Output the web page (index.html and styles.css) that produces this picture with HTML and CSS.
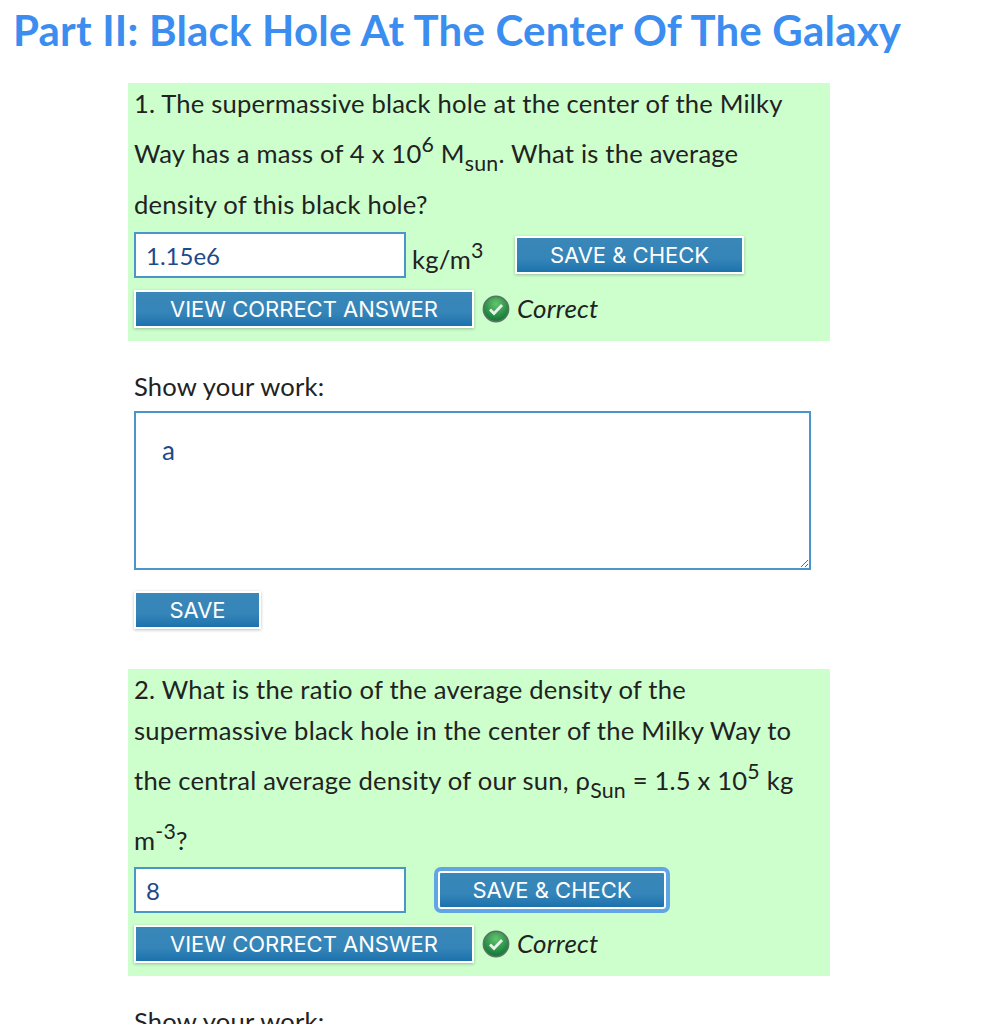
FILE: index.html
```html
<!DOCTYPE html>
<html lang="en">
<head>
    <meta charset="UTF-8">
    <title>Part II: Black Hole At The Center Of The Galaxy</title>
    <link rel="stylesheet" href="styles.css">
</head>
<body>
    <h1>Part II: Black Hole At The Center Of The Galaxy</h1>
    <div class="container">
        <div class="question">
            <p>1. The supermassive black hole at the center of the Milky Way has a mass of 4 x 10<sup>6</sup> M<sub>sun</sub>. What is the average density of this black hole?</p>
            <div class="answer-row answer-row-unit">
                <input class="answer" type="text" value="1.15e6">
                <span class="unit">kg/m<sup>3</sup></span>
                <button class="btn btn-check" type="button">SAVE &amp; CHECK</button>
            </div>
            <div class="result-row">
                <button class="btn btn-view" type="button">VIEW CORRECT ANSWER</button>
                <svg class="check" viewBox="0 0 28 28"><use href="#check-icon"></use></svg>
                <em>Correct</em>
            </div>
        </div>
        <div class="work">
            <p>Show your work:</p>
            <textarea>a</textarea>
            <button class="btn btn-save" type="button">SAVE</button>
        </div>
        <div class="question">
            <p>2. What is the ratio of the average density of the supermassive black hole in the center of the Milky Way to the central average density of our sun, &rho;<sub>Sun</sub> = 1.5 x 10<sup>5</sup> kg m<sup>-3</sup>?</p>
            <div class="answer-row">
                <input class="answer" type="text" value="8">
                <button class="btn btn-check btn-focus" type="button">SAVE &amp; CHECK</button>
            </div>
            <div class="result-row">
                <button class="btn btn-view" type="button">VIEW CORRECT ANSWER</button>
                <svg class="check" viewBox="0 0 28 28"><use href="#check-icon"></use></svg>
                <em>Correct</em>
            </div>
        </div>
        <div class="work">
            <p>Show your work:</p>
        </div>
    </div>
    <svg class="defs" width="0" height="0">
        <defs>
            <radialGradient id="green" cx="50%" cy="30%" r="70%">
                <stop offset="0%" stop-color="#62c56e"/>
                <stop offset="100%" stop-color="#0d7433"/>
            </radialGradient>
            <g id="check-icon">
                <circle cx="14" cy="14" r="12.6" fill="url(#green)" stroke="#5b7564" stroke-width="1.6"/>
                <path d="M8 14.5l4 4 8-8.5" fill="none" stroke="#e9f2ea" stroke-width="2.8"/>
            </g>
        </defs>
    </svg>
</body>
</html>
```

FILE: styles.css
```css
html, body {
    height: 1024px;
    overflow: hidden;
}
body {
    margin: 0;
    font-family: "Lato", sans-serif;
    font-size: 25.6px;
    line-height: 41px;
    letter-spacing: 0.2px;
    color: #222;
    background: white;
}
h1 {
    margin: 0;
    padding: 5px 0 0 13px;
    height: 83px;
    box-sizing: border-box;
    font-size: 42px;
    line-height: 50px;
    font-weight: 700;
    letter-spacing: 0.2px;
    color: #3b8ef0;
    white-space: nowrap;
}
p {
    margin: 0;
}
sup {
    vertical-align: 11px;
}
sub {
    vertical-align: -8px;
}
.container {
    width: 702px;
    margin-left: 128px;
}
.question {
    background: #ccffcc;
    padding: 0 6px 6px;
}
.question p {
    max-width: 670px;
}
.answer-row {
    display: flex;
    align-items: center;
    height: 54px;
    margin-top: 2px;
}
.answer-row-unit {
    margin-top: 3px;
}
.answer {
    width: 272px;
    height: 46px;
    box-sizing: border-box;
    padding: 0 10px;
    border: 2px solid #4b96c8;
    background: white;
    color: #1c4a8a;
    font-family: inherit;
    font-size: 24px;
}
.unit {
    margin-left: 6px;
    width: 103px;
}
.btn {
    height: 38px;
    border: 2px solid white;
    box-shadow: 0 1px 3px rgba(0, 0, 0, 0.25);
    background: linear-gradient(#3a87b9, #3585b8 60%, #1d72ad);
    color: white;
    font-family: "Inter", sans-serif;
    font-size: 22px;
    padding: 0;
}
.btn-check {
    width: 229px;
}
.btn-view {
    width: 340px;
}
.btn-save {
    width: 127px;
    display: block;
    margin-top: 21px;
}
.btn-focus {
    margin-left: 32px;
    width: 228px;
    outline: 4px solid #62a5e5;
    border-radius: 3px;
}
.result-row {
    display: flex;
    align-items: center;
    height: 53px;
    font-size: 26px;
}
.check {
    width: 28px;
    height: 28px;
    margin: 0 7px 0 8px;
}
.work {
    padding: 25px 6px 40px;
}
textarea {
    display: block;
    width: 677px;
    height: 159px;
    margin-top: 4px;
    box-sizing: border-box;
    padding: 21px 26px;
    border: 2px solid #4b96c8;
    color: #1c4a8a;
    font-family: inherit;
    font-size: 26px;
}
.defs {
    position: absolute;
}
```
